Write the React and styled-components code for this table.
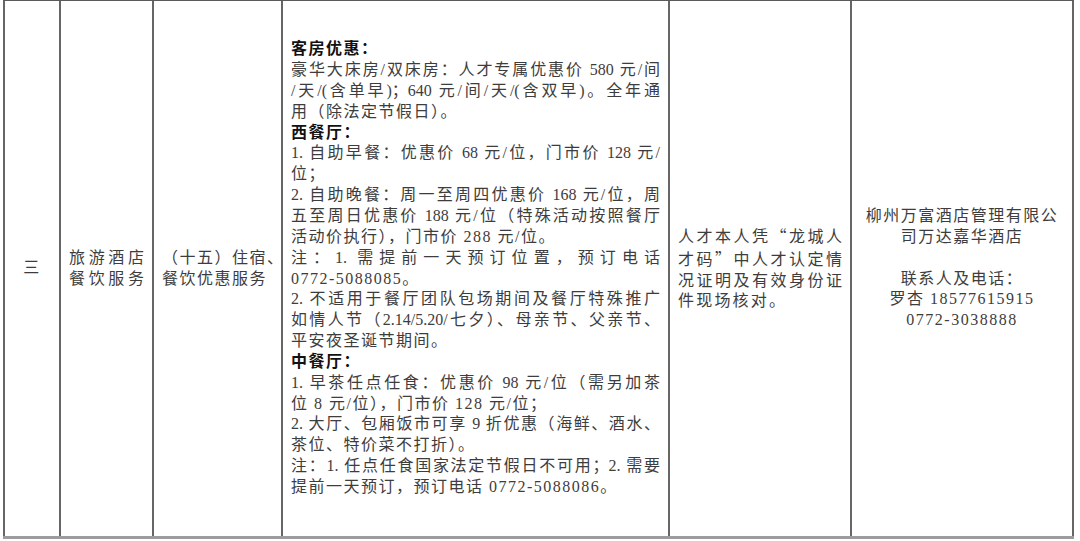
import React from "react";
import styled, { createGlobalStyle } from "styled-components";

const GlobalStyle = createGlobalStyle`
  html, body { margin: 0; padding: 0; background: #ffffff; }
  body { font-family: "Liberation Serif", "Noto Sans CJK SC", serif; }
`;

const Page = styled.div`
  width: 1080px;
  padding: 0 6px 0 3px;
  box-sizing: border-box;
`;

const Table = styled.div`
  display: grid;
  grid-template-columns: 56px 93px 129px 387px 182px 224px;
  height: 539px;
  box-sizing: border-box;
  border-top: 1px solid #5a5a5a;
  border-bottom: 3px solid #9c9c9c;
`;

const Cell = styled.div`
  display: flex;
  flex-direction: column;
  justify-content: center;
  align-items: ${(p) => (p.$center ? "center" : "stretch")};
  border-left: 2px solid #666;
  ${(p) => (p.$last ? "border-right: 2px solid #666;" : "")}
  padding: 0 8px;
  box-sizing: border-box;
  min-width: 0;
`;

const Line = styled.div`
  font-size: 16px;
  line-height: 20.85px;
  color: ${(p) => (p.$bold ? "#111" : "#3d3d3d")};
  font-weight: ${(p) => (p.$bold ? 700 : 400)};
  letter-spacing: ${(p) => (p.$full ? "0px" : p.$ls || "1.5px")};
  text-align: ${(p) => (p.$full ? "justify" : "inherit")};
  text-align-last: ${(p) => (p.$full ? "justify" : "auto")};
  white-space: ${(p) => (p.$nowrap ? "nowrap" : "normal")};
`;

const Gap = styled.div`
  height: 20.85px;
`;

const Cjk = styled.span`
  font-family: "Noto Sans CJK SC", sans-serif;
`;

const roomLines = [
  { t: "客房优惠：", bold: true },
  { t: "豪华大床房/双床房：人才专属优惠价 580 元/间", full: true },
  { t: "/天/(含单早)；640 元/间/天/(含双早)。全年通", full: true },
  { t: "用（除法定节假日）。" },
  { t: "西餐厅：", bold: true },
  { t: "1. 自助早餐：优惠价 68 元/位，门市价 128 元/", full: true },
  { t: "位；" },
  { t: "2. 自助晚餐：周一至周四优惠价 168 元/位，周", full: true },
  { t: "五至周日优惠价 188 元/位（特殊活动按照餐厅", full: true },
  { t: "活动价执行），门市价 288 元/位。" },
  { t: "注：1. 需提前一天预订位置，预订电话", full: true },
  { t: "0772-5088085。" },
  { t: "2. 不适用于餐厅团队包场期间及餐厅特殊推广", full: true },
  { t: "如情人节（2.14/5.20/七夕）、母亲节、父亲节、", full: true },
  { t: "平安夜圣诞节期间。" },
  { t: "中餐厅：", bold: true },
  { t: "1. 早茶任点任食：优惠价 98 元/位（需另加茶", full: true },
  { t: "位 8 元/位），门市价 128 元/位；" },
  { t: "2. 大厅、包厢饭市可享 9 折优惠（海鲜、酒水、", full: true },
  { t: "茶位、特价菜不打折）。" },
  { t: "注：1. 任点任食国家法定节假日不可用；2. 需要", full: true },
  { t: "提前一天预订，预订电话 0772-5088086。" },
];

export default function App() {
  return (
    <>
      <GlobalStyle />
      <Page>
        <Table>
          <Cell $center>
            <Line>三</Line>
          </Cell>
          <Cell>
            <Line $full>旅游酒店</Line>
            <Line $full>餐饮服务</Line>
          </Cell>
          <Cell>
            <Line $nowrap>（十五）住宿、</Line>
            <Line $nowrap>餐饮优惠服务</Line>
          </Cell>
          <Cell>
            {roomLines.map((l, i) => (
              <Line key={i} $full={l.full} $bold={l.bold}>
                {l.t}
              </Line>
            ))}
          </Cell>
          <Cell>
            <Line $full>
              人才本人凭<Cjk>“</Cjk>龙城人
            </Line>
            <Line $full>
              才码<Cjk>”</Cjk>中人才认定情
            </Line>
            <Line $full>况证明及有效身份证</Line>
            <Line $ls="2.2px">件现场核对。</Line>
          </Cell>
          <Cell $center $last>
            <Line>柳州万富酒店管理有限公</Line>
            <Line>司万达嘉华酒店</Line>
            <Gap />
            <Line>联系人及电话：</Line>
            <Line>罗杏 18577615915</Line>
            <Line>0772-3038888</Line>
          </Cell>
        </Table>
      </Page>
    </>
  );
}
